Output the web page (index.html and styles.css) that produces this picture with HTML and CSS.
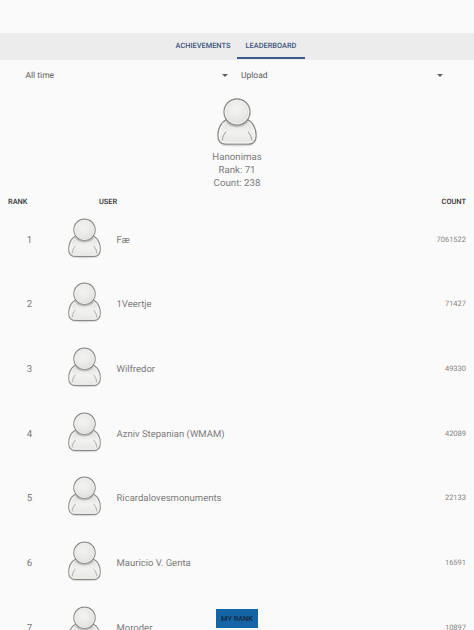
FILE: index.html
```
<!DOCTYPE html>
<html lang="en">
<head>
    <meta charset="UTF-8">
    <meta name="viewport" content="width=device-width, initial-scale=1.0">
    <title>Leaderboard</title>
    <link rel="stylesheet" href="styles.css">
</head>
<body>
    <!-- Avatar shared by the profile and every row -->
    <svg class="defs" width="0" height="0">
        <defs>
            <radialGradient id="head-fill" cx="45%" cy="40%" r="62%">
                <stop offset="0" stop-color="#f4f4f2"/>
                <stop offset="0.6" stop-color="#e9e9e7"/>
                <stop offset="1" stop-color="#dcdcd9"/>
            </radialGradient>
            <linearGradient id="body-fill" x1="0" y1="0" x2="0" y2="1">
                <stop offset="0" stop-color="#dcdcd9"/>
                <stop offset="0.5" stop-color="#f2f2f0"/>
                <stop offset="1" stop-color="#e6e6e3"/>
            </linearGradient>
            <symbol id="avatar" viewBox="0 0 40 49">
                <ellipse cx="20" cy="46.8" rx="16" ry="1.6" fill="#d6d6d6"/>
                <path d="M9.500 21.500C3.500 24.500 0.900 31.500 0.900 37.500c0 5 2.600 8.700 8.100 8.700h22c5.500 0 8.100-3.700 8.100-8.700 0-6-2.600-13-8.600-16z" fill="url(#body-fill)" stroke="#8a8a88" stroke-width="1.300"/>
                <path d="M8.500 24C4.500 27 2.300 32 2.300 37.500c0 4.500 2 7.300 6.700 7.300h22c4.700 0 6.700-2.800 6.700-7.300 0-5.500-2.200-10.500-6.200-13.500" fill="none" stroke="#fafafa" stroke-width="0.900"/>
                <path d="M9 33.500c-2.500 3-3.600 5.500-3.900 9M31 33.500c2.500 3 3.600 5.500 3.900 9" fill="none" stroke="#a8a8a5" stroke-width="1.100"/>
                <path d="M9.500 23.500c5 6.500 16 6.500 21 0" fill="none" stroke="#c2c2bf" stroke-width="2"/>
                <circle cx="20" cy="14" r="13" fill="url(#head-fill)" stroke="#8a8a88" stroke-width="1.300"/>
                <circle cx="20" cy="14" r="11.900" fill="none" stroke="#f6f6f4" stroke-width="0.800"/>
            </symbol>
        </defs>
    </svg>

    <nav class="tabs">
        <a class="tab">ACHIEVEMENTS</a>
        <a class="tab active">LEADERBOARD</a>
    </nav>

    <div class="filters">
        <div class="filter"><span>All time</span><i class="arrow"></i></div>
        <div class="filter"><span>Upload</span><i class="arrow"></i></div>
    </div>

    <section class="profile">
        <svg class="avatar-large"><use href="#avatar"/></svg>
        <p>Hanonimas</p>
        <p>Rank: 71</p>
        <p>Count: 238</p>
    </section>

    <div class="list-header">
        <span class="col-rank">RANK</span>
        <span class="col-user">USER</span>
        <span>COUNT</span>
    </div>

    <main class="list">
        <div class="row">
            <span class="rank">1</span>
            <svg class="avatar"><use href="#avatar"/></svg>
            <span class="name">Fæ</span>
            <span class="count">7061522</span>
        </div>
        <div class="row">
            <span class="rank">2</span>
            <svg class="avatar"><use href="#avatar"/></svg>
            <span class="name">1Veertje</span>
            <span class="count">71427</span>
        </div>
        <div class="row">
            <span class="rank">3</span>
            <svg class="avatar"><use href="#avatar"/></svg>
            <span class="name">Wilfredor</span>
            <span class="count">49330</span>
        </div>
        <div class="row">
            <span class="rank">4</span>
            <svg class="avatar"><use href="#avatar"/></svg>
            <span class="name">Azniv Stepanian (WMAM)</span>
            <span class="count">42089</span>
        </div>
        <div class="row">
            <span class="rank">5</span>
            <svg class="avatar"><use href="#avatar"/></svg>
            <span class="name">Ricardalovesmonuments</span>
            <span class="count">22133</span>
        </div>
        <div class="row">
            <span class="rank">6</span>
            <svg class="avatar"><use href="#avatar"/></svg>
            <span class="name">Mauricio V. Genta</span>
            <span class="count">16591</span>
        </div>
        <div class="row">
            <span class="rank">7</span>
            <svg class="avatar"><use href="#avatar"/></svg>
            <span class="name">Moroder</span>
            <span class="count">10897</span>
        </div>
    </main>

    <button class="my-rank">MY RANK</button>
</body>
</html>
```
FILE: styles.css
```
/* Reset */
* {
    margin: 0;
    padding: 0;
    box-sizing: border-box;
}

body {
    height: 630px;
    overflow: hidden;
    padding-top: 33px;
    background-color: #fafafa;
    color: #7a7a7a;
    font-family: Roboto, sans-serif;
    text-rendering: geometricPrecision;
}

.defs {
    display: block;
}

/* Tabs */
.tabs {
    display: flex;
    justify-content: center;
    height: 27px;
    background-color: #ececec;
}

.tab {
    width: 68px;
    height: 26px;
    padding-top: 1px;
    border-bottom: 2px solid transparent;
    color: #3d547e;
    font-size: 7.4px;
    font-weight: 500;
    line-height: 24px;
    text-align: center;
}

.tab.active {
    border-bottom-color: #3d5a8c;
}

/* Filters */
.filters {
    display: flex;
    height: 31px;
    padding-left: 25.5px;
}

.filter {
    display: flex;
    align-items: center;
    justify-content: space-between;
    width: 202px;
    margin-right: 13.5px;
    color: #5c5c5c;
    font-size: 8.5px;
}

.arrow {
    border: 3px solid transparent;
    border-top-color: #606060;
    border-bottom: 0;
}

/* Profile */
.profile {
    display: flex;
    flex-direction: column;
    align-items: center;
    height: 104px;
    padding-top: 7px;
    font-size: 9.7px;
    line-height: 13px;
}

.avatar-large {
    width: 40px;
    height: 49px;
    margin-bottom: 4px;
    flex-shrink: 0;
}

/* Leaderboard */
.list-header {
    display: flex;
    height: 14px;
    padding: 0 8px;
    color: #333;
    font-size: 7.4px;
    font-weight: 500;
    line-height: 14px;
}

.col-rank {
    width: 91px;
}

.col-user {
    flex: 1;
}

.list {
    margin-top: -2px;
}

.row {
    display: flex;
    align-items: center;
    height: 64.67px;
    padding-right: 8px;
}

.rank {
    width: 59px;
    margin-right: 9px;
    padding-top: 2px;
    font-size: 9.7px;
    text-align: center;
}

.avatar {
    width: 33px;
    height: 41px;
    margin: 0 15.5px 2px 0;
}

.name {
    flex: 1;
    padding-top: 2px;
    font-size: 9.5px;
}

.count {
    color: #858585;
    font-size: 7.5px;
}

/* Floating button over the list */
.my-rank {
    position: fixed;
    bottom: 2px;
    left: 216px;
    width: 42px;
    height: 19px;
    border: 0;
    background-color: #1564a5;
    color: #10273f;
    font-family: Roboto, sans-serif;
    font-size: 7.3px;
    font-weight: 500;
}
```
